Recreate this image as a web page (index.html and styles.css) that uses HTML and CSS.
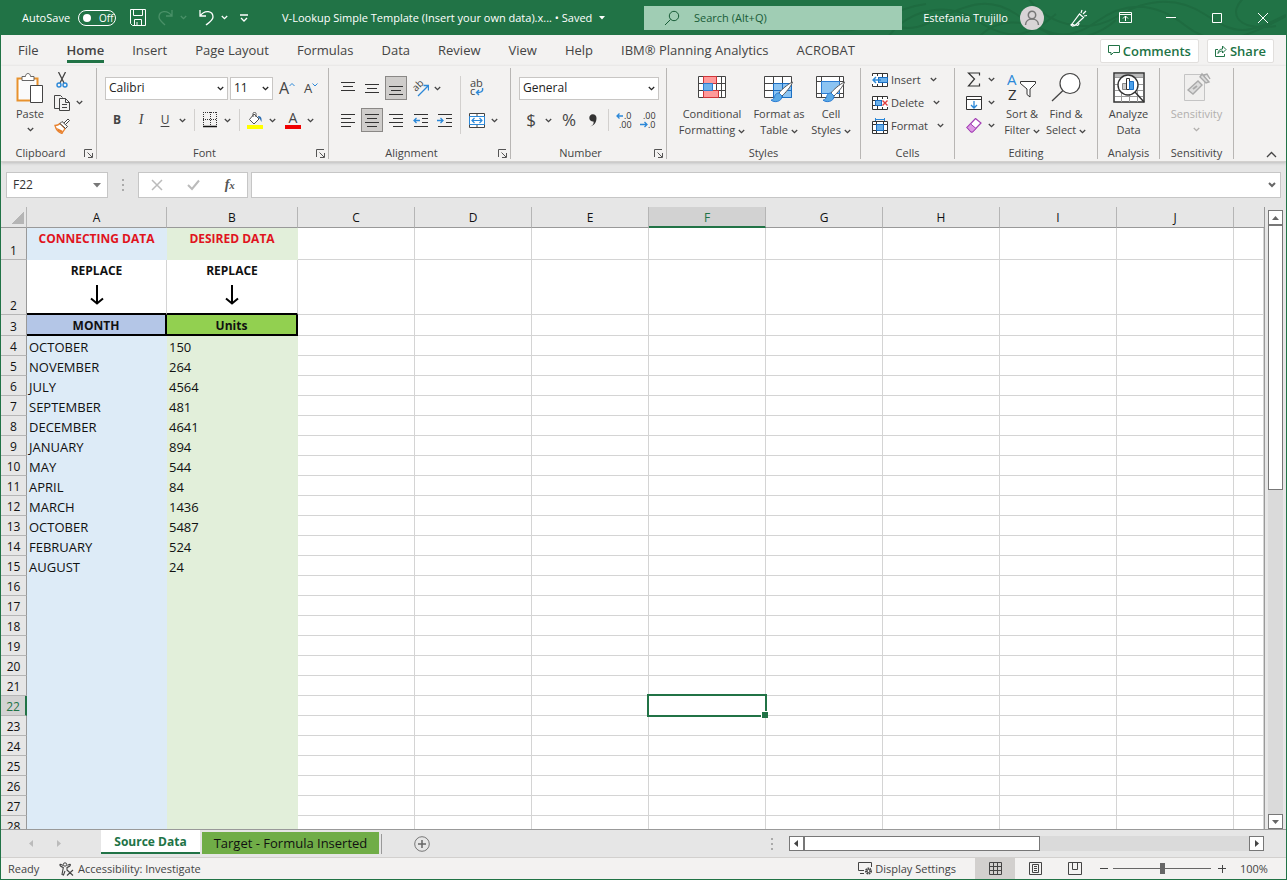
FILE: index.html
```html
<!DOCTYPE html>
<html lang="en">
<head>
    <meta charset="UTF-8">
    <meta name="viewport" content="width=device-width, initial-scale=1.0">
    <title>V-Lookup Simple Template</title>
    <link rel="stylesheet" href="styles.css">
</head>
<body>
    <!-- shared icons -->
    <svg class="sprite">
        <symbol id="chev" viewBox="0 0 7 5"><path d="M.8 1l2.7 2.6L6.2 1" fill="none" stroke="currentColor" stroke-width="1.3"/></symbol>
        <symbol id="launch" viewBox="0 0 9 9"><path d="M.5 8V.5H8M3.5 3.5L8 8M8.5 4v4.500H4" fill="none" stroke="#555"/></symbol>
        <symbol id="brush" viewBox="0 0 24 22"><path d="M22.500 1C18 3 11 9 9 12l3 3C15 12 21 6 22.500 1z" fill="#fff" stroke="#555"/><path d="M9 12c-4 0-4 3-5 5-1 1.500-2 2-3 2 3 3 11 2 11-4z" fill="#5aa9e6" stroke="#2b7cd3"/></symbol>
    </svg>

    <header class="titlebar">
        <svg class="swirls" viewBox="0 0 460 35" preserveAspectRatio="xMaxYMid slice">
            <path d="M0 12c30-20 60 30 100 12s60-30 90-10 50 30 80 8 60-20 90 4 60 12 100-10M60 40c20-30 60-40 90-20s50 20 80-6M200-5c20 30 60 40 90 22s60-22 90-2 40 20 80 0M0 28c40 12 60-20 100-24M150 40c20-24 50-20 70-8s50 6 70-12M420-4c-20 16-10 36 30 30"/>
        </svg>
        <div class="title-left">
            <label class="autosave" for="autosave">AutoSave</label>
            <span class="toggle"><input type="checkbox" id="autosave">Off</span>
            <button class="tb-btn" aria-label="Save"><svg width="16" height="17" viewBox="0 0 16 17"><path d="M.5.500h15v16h-13l-2-2zM3.500.500v6h9v-6M4.500 16.500v-6h7v6M7 16v-3" fill="none" stroke="#fff"/></svg></button>
            <button class="tb-btn dim" aria-label="Redo"><svg width="16" height="17" viewBox="0 0 16 17"><path d="M14 1v6H8M14 7C9 0 1 2 1 8c0 3 3 5 6 8" fill="none" stroke="currentColor" stroke-width="1.300"/></svg><svg class="chev"><use href="#chev"/></svg></button>
            <button class="tb-btn" aria-label="Undo"><svg width="16" height="17" viewBox="0 0 16 17"><path d="M1 1v6h6M1 7C6 0 14 2 14 8c0 3-3 5-7 8" fill="none" stroke="currentColor" stroke-width="1.300"/></svg><svg class="chev"><use href="#chev"/></svg></button>
            <button class="tb-btn" aria-label="Customize"><svg width="8" height="8" viewBox="0 0 8 8"><path d="M0 1h8M1 4l3 3 3-3" fill="none" stroke="#fff" stroke-width="1.300"/></svg></button>
            <span class="doc">V-Lookup Simple Template (Insert your own data).x... • Saved
                <svg width="6" height="4" viewBox="0 0 6 4"><path d="M0 0h6L3 3.500z" fill="#fff"/></svg>
            </span>
        </div>
        <div class="search">
            <svg width="16" height="16" viewBox="0 0 16 16"><path d="M6.500 9.500L1 15" stroke="#185c37"/><circle cx="10" cy="6" r="4.700" fill="none" stroke="#185c37"/></svg>
            <input type="text" placeholder="Search (Alt+Q)" aria-label="Search">
        </div>
        <div class="title-right">
            <span class="user">Estefania Trujillo</span>
            <svg class="avatar" width="24" height="24" viewBox="0 0 24 24"><circle cx="12" cy="12" r="12" fill="#d8d4d6"/><circle cx="12" cy="9" r="3.700" fill="none" stroke="#777" stroke-width="1.500"/><path d="M5.500 19c0-8 13-8 13 0" fill="none" stroke="#777" stroke-width="1.500"/></svg>
            <button class="win" aria-label="Coming soon"><svg width="18" height="18" viewBox="0 0 18 18"><path d="M2 15L9.500 5l4 3.500L5 16.500zM2 15l-1 1 1.500 1L5 16.500M6 15c0 2 3 2 3-1M11 4l1-3M13 5l3-3M14 7l3-.5" fill="none" stroke="#fff" stroke-width="1.200"/></svg></button>
            <button class="win" aria-label="Ribbon options"><svg width="13" height="11" viewBox="0 0 13 11"><path d="M.5.500h12v10H.5zM.5 2.500h12M6.500 9V4M4 6.500L6.500 4 9 6.500" fill="none" stroke="#fff"/></svg></button>
            <button class="win" aria-label="Minimize"><svg width="10" height="10" viewBox="0 0 10 10"><path d="M0 4.500h10" stroke="#fff"/></svg></button>
            <button class="win" aria-label="Maximize"><svg width="10" height="10" viewBox="0 0 10 10"><path d="M.5.500h9v9h-9z" fill="none" stroke="#fff"/></svg></button>
            <button class="win" aria-label="Close"><svg width="10" height="10" viewBox="0 0 10 10"><path d="M0 0l10 10M10 0L0 10" stroke="#fff"/></svg></button>
        </div>
    </header>

    <nav class="tabs">
        <a href="#">File</a>
        <a href="#" class="current">Home</a>
        <a href="#">Insert</a>
        <a href="#">Page Layout</a>
        <a href="#">Formulas</a>
        <a href="#">Data</a>
        <a href="#">Review</a>
        <a href="#">View</a>
        <a href="#">Help</a>
        <a href="#">IBM® Planning Analytics</a>
        <a href="#">ACROBAT</a>
        <div class="tab-actions">
            <button><svg width="12" height="11" viewBox="0 0 12 11"><path d="M.5.500h11v7h-6L3 10V7.500H.5z" fill="none" stroke="#217346"/></svg>Comments</button>
            <button><svg width="12" height="12" viewBox="0 0 12 12"><path d="M3 4.500H.5v7h9V9M3 8.500c0-3 2-4.500 4.500-4.500V1L11 4.500 7.500 8V6C5.500 6 4 6.500 3 8.500z" fill="none" stroke="#217346"/></svg>Share</button>
        </div>
    </nav>

    <section class="ribbon">
        <div class="group g-clip">
            <div class="body">
                <button class="big">
                    <svg width="28" height="30" viewBox="0 0 28 30"><path d="M1.500 5.500h20v22h-20z" fill="#fff" stroke="#e8912d" stroke-width="2"/><path d="M4 8h15v18H4z" fill="#fafafa"/><path d="M6 7.500v-4h3.500c0-4 5-4 5 0H18v4z" fill="#fff" stroke="#666"/><path d="M14.500 12.500h12v17h-12z" fill="#fff" stroke="#444"/></svg>
                    <span>Paste</span><svg class="chev"><use href="#chev"/></svg>
                </button>
                <div class="stack">
                    <button aria-label="Cut"><svg width="16" height="16" viewBox="0 0 16 16"><path d="M4.500 0l5.500 11M11.500 0L6 11" stroke="#444" stroke-width="1.300"/><circle cx="5" cy="13" r="2" fill="none" stroke="#2b88d8" stroke-width="1.400"/><circle cx="11" cy="13" r="2" fill="none" stroke="#2b88d8" stroke-width="1.400"/></svg></button>
                    <button aria-label="Copy"><svg width="16" height="16" viewBox="0 0 16 16"><path d="M5 13.500H.5v-13h6l2 2M5.500 3.500h6l4 4v8h-10zM11.500 3.500v4h4M8 9.500h5M8 12.500h5" fill="none" stroke="#444"/></svg><svg class="chev"><use href="#chev"/></svg></button>
                    <button aria-label="Format Painter"><svg width="16" height="16" viewBox="0 0 16 16"><path d="M1 7.500c3 0 4-1 5-2l5 5c-1 2-2 3-3 5-3-1-6-4-7-8z" fill="#fff" stroke="#e8812d" stroke-width="1.300"/><path d="M3 10l6 3-1 2-4-2z" fill="#e8812d"/><path d="M6 5.500l2-2 5.500 5-2 2zM10 5l4-4 1.500 1.500-4 4" fill="#fff" stroke="#444"/></svg></button>
                </div>
            </div>
            <div class="caption"><span>Clipboard</span><svg class="launch"><use href="#launch"/></svg></div>
        </div>

        <div class="group g-font">
            <div class="body rows">
                <div class="line">
                    <span class="drop font-name"><select aria-label="Font"><option>Calibri</option></select><svg class="chev"><use href="#chev"/></svg></span>
                    <span class="drop font-size"><select aria-label="Font size"><option>11</option></select><svg class="chev"><use href="#chev"/></svg></span>
                    <button class="ib letter-lg">A<svg width="6" height="12" viewBox="0 0 6 12"><path d="M.5 4L3 1.500 5.500 4" fill="none" stroke="#2b88d8"/></svg></button>
                    <button class="ib letter-md">A<svg width="6" height="12" viewBox="0 0 6 12"><path d="M.5 1.500L3 4l2.500-2.500" fill="none" stroke="#2b88d8"/></svg></button>
                </div>
                <div class="line">
                    <button class="ib bold">B</button>
                    <button class="ib italic">I</button>
                    <button class="ib under">U</button>
                    <button class="arrow" aria-label="Underline options"><svg class="chev"><use href="#chev"/></svg></button>
                    <i class="sep"></i>
                    <button class="ib" aria-label="Borders"><svg width="16" height="16" viewBox="0 0 16 16"><path d="M1.500 0v14M14.500 0v14M8.500 0v14M1 .500h14M1 7.500h14" fill="none" stroke="#333" stroke-dasharray="1 1"/><path d="M1 14.500h14" stroke="#111" stroke-width="1.500"/></svg></button>
                    <button class="arrow" aria-label="Border options"><svg class="chev"><use href="#chev"/></svg></button>
                    <i class="sep"></i>
                    <button class="ib" aria-label="Fill color"><svg width="16" height="17" viewBox="0 0 16 17"><path d="M0 13h16v4H0z" fill="#ff0"/><path d="M7 2L2.500 7.500 7 12l5-5zM6 5V1.500c0-1.500 3-1.500 3 0V5" fill="#fff" stroke="#555"/><path d="M11 4c3 0 4 2 3.500 6-1-1.500-1-3-3-4z" fill="#2b6cb0"/></svg></button>
                    <button class="arrow" aria-label="Fill options"><svg class="chev"><use href="#chev"/></svg></button>
                    <button class="ib font-color">A</button>
                    <button class="arrow" aria-label="Font color options"><svg class="chev"><use href="#chev"/></svg></button>
                </div>
            </div>
            <div class="caption"><span>Font</span><svg class="launch"><use href="#launch"/></svg></div>
        </div>

        <div class="group g-align">
            <div class="body">
                <div class="rows">
                    <div class="line">
                        <button class="ib" aria-label="Top align"><svg width="14" height="14" viewBox="0 0 14 14"><path d="M0 1.500h14M2 5.500h10M0 9.500h14" stroke="#333"/></svg></button>
                        <button class="ib" aria-label="Middle align"><svg width="14" height="14" viewBox="0 0 14 14"><path d="M0 3.500h14M2 7.500h10M0 11.500h14" stroke="#333"/></svg></button>
                        <button class="ib pressed" aria-label="Bottom align"><svg width="14" height="14" viewBox="0 0 14 14"><path d="M0 5.500h14M2 9.500h10M0 13.500h14" stroke="#333"/></svg></button>
                        <button class="ib" aria-label="Orientation"><svg width="18" height="18" viewBox="0 0 18 18"><text x="0" y="0" transform="translate(5 13) rotate(-45)" font-size="10" fill="#444">ab</text><path d="M7 17L17 7M12.500 6.500h5v5" fill="none" stroke="#2b88d8" stroke-width="1.300"/></svg></button>
                        <button class="arrow" aria-label="Orientation options"><svg class="chev"><use href="#chev"/></svg></button>
                    </div>
                    <div class="line">
                        <button class="ib" aria-label="Align left"><svg width="14" height="14" viewBox="0 0 14 14"><path d="M0 1.500h14M0 5.500h10M0 9.500h14M0 13.500h10" stroke="#333"/></svg></button>
                        <button class="ib pressed" aria-label="Center"><svg width="14" height="14" viewBox="0 0 14 14"><path d="M0 1.500h14M2 5.500h10M0 9.500h14M2 13.500h10" stroke="#333"/></svg></button>
                        <button class="ib" aria-label="Align right"><svg width="14" height="14" viewBox="0 0 14 14"><path d="M0 1.500h14M4 5.500h10M0 9.500h14M4 13.500h10" stroke="#333"/></svg></button>
                        <button class="ib" aria-label="Decrease indent"><svg width="15" height="14" viewBox="0 0 15 14"><path d="M1 1.500h14M9 5.500h6M9 9.500h6M1 13.500h14" stroke="#333"/><path d="M7 7.500H.8M3.500 5L1 7.500 3.500 10" fill="none" stroke="#2b88d8" stroke-width="1.300"/></svg></button>
                        <button class="ib" aria-label="Increase indent"><svg width="15" height="14" viewBox="0 0 15 14"><path d="M1 1.500h14M9 5.500h6M9 9.500h6M1 13.500h14" stroke="#333"/><path d="M0 7.500h6.200M3.500 5L6 7.500 3.500 10" fill="none" stroke="#2b88d8" stroke-width="1.300"/></svg></button>
                    </div>
                </div>
                <i class="sep tall"></i>
                <div class="rows">
                    <div class="line">
                        <button class="ib" aria-label="Wrap text"><svg width="16" height="18" viewBox="0 0 16 18"><text x="1" y="8" font-size="11" fill="#444">ab</text><text x="1" y="16" font-size="11" fill="#444">c</text><path d="M13.500 9c1 4-2 4.500-6 4.500M10 11l-2.500 2.500L10 16" fill="none" stroke="#2b88d8" stroke-width="1.400"/></svg></button>
                    </div>
                    <div class="line">
                        <button class="ib" aria-label="Merge"><svg width="16" height="15" viewBox="0 0 16 15"><path d="M.5.500h15v14H.5zM8 .500V3M8 12v2.500" fill="#fff" stroke="#444"/><path d="M.5 3.500h15v8H.5z" fill="#fff" stroke="#2b88d8"/><path d="M3 7.500h10M5.500 5L3 7.500 5.500 10M10.500 5L13 7.500 10.500 10" fill="none" stroke="#2b88d8" stroke-width="1.200"/></svg></button>
                        <button class="arrow" aria-label="Merge options"><svg class="chev"><use href="#chev"/></svg></button>
                    </div>
                </div>
            </div>
            <div class="caption"><span>Alignment</span><svg class="launch"><use href="#launch"/></svg></div>
        </div>

        <div class="group g-num">
            <div class="body rows">
                <div class="line">
                    <span class="drop num-format"><select aria-label="Number format"><option>General</option></select><svg class="chev"><use href="#chev"/></svg></span>
                </div>
                <div class="line">
                    <button class="ib sign">$</button>
                    <button class="arrow" aria-label="Currency options"><svg class="chev"><use href="#chev"/></svg></button>
                    <button class="ib sign">%</button>
                    <button class="ib" aria-label="Comma style"><svg width="8" height="13" viewBox="0 0 8 13"><path d="M1 12.500c3-1 4-3 3.500-5A3.600 3.600 0 1 1 7.500 4c0 4-2 7.500-6.500 8.500z" fill="#333"/></svg></button>
                    <i class="sep"></i>
                    <button class="ib" aria-label="Increase decimal"><svg width="16" height="18" viewBox="0 0 16 18"><text x="8" y="8" font-size="9" fill="#333">.0</text><text x="3" y="17" font-size="9" fill="#333">.00</text><path d="M7 5H1M3.500 2.500L1 5l2.500 2.500" fill="none" stroke="#2b88d8" stroke-width="1.300"/></svg></button>
                    <button class="ib" aria-label="Decrease decimal"><svg width="16" height="18" viewBox="0 0 16 18"><text x="3" y="8" font-size="9" fill="#333">.00</text><text x="8" y="17" font-size="9" fill="#333">.0</text><path d="M0 13.500h7M4.500 11L7 13.500 4.500 16" fill="none" stroke="#2b88d8" stroke-width="1.300"/></svg></button>
                </div>
            </div>
            <div class="caption"><span>Number</span><svg class="launch"><use href="#launch"/></svg></div>
        </div>

        <div class="group g-styles">
            <div class="body">
                <button class="big w-wide">
                    <svg width="28" height="28" viewBox="0 0 28 28"><path d="M.5 2.500h27v21H.5zM5.500 2.500v21M18.500 2.500v21M23.500 2.500v21M.5 9.500h27M.5 16.500h27" fill="#fff" stroke="#444"/><path d="M5.500 2.500h13v7h-13zM5.500 16.500h15v7h-15z" fill="#ff9a9a" stroke="#d13438"/><path d="M5.500 9.500h9v7h-9z" fill="#6db1ea" stroke="#2b7cd3"/></svg>
                    <span>Conditional<br>Formatting <svg class="chev"><use href="#chev"/></svg></span>
                </button>
                <button class="big w-mid">
                    <svg width="30" height="28" viewBox="0 0 30 28"><path d="M.5 2.500h27v21H.5zM9.500 2.500v21M18.500 2.500v21M.5 9.500h27M.5 16.500h27" fill="#fff" stroke="#444"/><path d="M9.500 9.500h18v14h-18zM18.500 9.500v14M9.500 16.500h18" fill="#8cc4f2" stroke="#1a6fc4"/><use href="#brush" x="6" y="7" width="24" height="22"/></svg>
                    <span>Format as<br>Table <svg class="chev"><use href="#chev"/></svg></span>
                </button>
                <button class="big w-small">
                    <svg width="30" height="28" viewBox="0 0 30 28"><path d="M.5 2.500h27v21H.5zM5.500 2.500v21M23.500 2.500v21M.5 7.500h27M.5 19.500h27" fill="#fff" stroke="#444"/><path d="M5.500 7.500h18v12h-18z" fill="#8cc4f2" stroke="#2b7cd3"/><use href="#brush" x="6" y="7" width="24" height="22"/></svg>
                    <span>Cell<br>Styles <svg class="chev"><use href="#chev"/></svg></span>
                </button>
            </div>
            <div class="caption"><span>Styles</span></div>
        </div>

        <div class="group g-cells">
            <div class="body">
                <div class="stack">
                    <button><svg width="16" height="14" viewBox="0 0 16 14"><path d="M.5.500h15v13H.5zM5.500.500v13M10.500.500v13M.5 4.500h15M.5 9.500h15" fill="#fff" stroke="#333"/><path d="M6.500 4.500h9v5h-9z" fill="#6db1ea" stroke="#1a6fc4"/><path d="M0 3h6v8H0z" fill="#fff"/><path d="M9 7H1M4 4L1 7l3 3" fill="none" stroke="#2b88d8" stroke-width="1.500"/></svg><span>Insert</span><svg class="chev"><use href="#chev"/></svg></button>
                    <button><svg width="16" height="14" viewBox="0 0 16 14"><path d="M.5.500h15v13H.5zM5.500.500v13M10.500.500v13M.5 4.500h15M.5 9.500h15" fill="#fff" stroke="#333"/><path d="M3.500 4.500h6v5h-6z" fill="#6db1ea" stroke="#1a6fc4"/><path d="M10 3h6v8h-6z" fill="#fff"/><path d="M10.500 4.500l5 5M15.500 4.500l-5 5" stroke="#e03c3c" stroke-width="1.400"/></svg><span>Delete</span><svg class="chev"><use href="#chev"/></svg></button>
                    <button><svg width="16" height="16" viewBox="0 0 16 16"><path d="M.5 3.500h15v12H.5zM4.500 3.500v12M11.500 3.500v12M.5 6.500h15M.5 12.500h15" fill="#fff" stroke="#333"/><path d="M4.500 6.500h7v6h-7z" fill="#6db1ea" stroke="#1a6fc4"/><path d="M3.500 0v3M12.500 0v3M4 1.500h8" stroke="#2b88d8"/></svg><span>Format</span><svg class="chev"><use href="#chev"/></svg></button>
                </div>
            </div>
            <div class="caption"><span>Cells</span></div>
        </div>

        <div class="group g-edit">
            <div class="body">
                <div class="stack">
                    <button aria-label="AutoSum"><svg width="16" height="15" viewBox="0 0 16 15"><path d="M13.500 3.500v-2.500h-11L8.500 7l-6 7h11v-2.500" fill="none" stroke="#333" stroke-width="1.200"/></svg><svg class="chev"><use href="#chev"/></svg></button>
                    <button aria-label="Fill"><svg width="16" height="14" viewBox="0 0 16 14"><path d="M.5.500h15v13H.5zM.5 3.500h15" fill="#fff" stroke="#333"/><path d="M8 5v6.500M5 9l3 3 3-3" fill="none" stroke="#2b88d8" stroke-width="1.300"/></svg><svg class="chev"><use href="#chev"/></svg></button>
                    <button aria-label="Clear"><svg width="16" height="15" viewBox="0 0 16 15"><path d="M1 9.500l8.500-9 5.500 4.500-8.500 9H5z" fill="#fff" stroke="#a33fb5" stroke-width="1.200"/><path d="M1 9.500l3.500-3.700L10 10.500 6.500 14H5z" fill="#dd9be4" stroke="#a33fb5"/></svg><svg class="chev"><use href="#chev"/></svg></button>
                </div>
                <button class="big w-small">
                    <svg width="30" height="30" viewBox="0 0 30 30"><text x="0" y="12" font-size="15" fill="#2b88d8">A</text><text x="1" y="27" font-size="15" fill="#333">Z</text><path d="M13.500 8.500h15v2l-5.500 5.500v8l-3-2.500V16l-6.500-5.500z" fill="#fff" stroke="#333"/></svg>
                    <span>Sort &amp;<br>Filter <svg class="chev"><use href="#chev"/></svg></span>
                </button>
                <button class="big w-small">
                    <svg width="30" height="30" viewBox="0 0 30 30"><circle cx="19" cy="10.500" r="10" fill="#fff" stroke="#444" stroke-width="1.200"/><path d="M12 17.500L1 28" stroke="#444" stroke-width="1.300"/></svg>
                    <span>Find &amp;<br>Select <svg class="chev"><use href="#chev"/></svg></span>
                </button>
            </div>
            <div class="caption"><span>Editing</span></div>
        </div>

        <div class="group g-analysis">
            <div class="body">
                <button class="big">
                    <svg width="32" height="32" viewBox="0 0 32 32"><path d="M1 1h30v29H1z" fill="#fff" stroke="#333" stroke-width="1.500"/><path d="M2 2h28v3H2z" fill="#bbb"/><path d="M2 5.500h28M2 12.500h28M2 18.500h28M2 24.500h28M8.500 19v11M16.500 19v11M24.500 19v11" stroke="#999"/><circle cx="15" cy="13" r="10" fill="#fff" stroke="#333" stroke-width="1.400"/><path d="M22 20l9 10" stroke="#333" stroke-width="1.500"/><path d="M9.500 11.500h4v6h-4z" fill="#ccc" stroke="#888"/><path d="M13.500 6.500h3v11h-3z" fill="#fff" stroke="#333"/><path d="M16.500 9.500h4v8h-4z" fill="#4ba0ea" stroke="#1a6fc4"/></svg>
                    <span>Analyze<br>Data</span>
                </button>
            </div>
            <div class="caption"><span>Analysis</span></div>
        </div>

        <div class="group g-sens">
            <div class="body">
                <button class="big" disabled>
                    <svg width="28" height="30" viewBox="0 0 28 30"><path d="M1.500 1.500h20v26h-20z" fill="#f0efee" stroke="#c4c4c4"/><path d="M5 17l10-9 4 4-9 9zM17 4l2-3 7 8-3 1zM21 2l3-1 3 5" fill="#ddd" stroke="#aaa" stroke-width="1.400"/><path d="M10 16l4-3" stroke="#aaa" stroke-width="2"/></svg>
                    <span>Sensitivity</span><svg class="chev"><use href="#chev"/></svg>
                </button>
            </div>
            <div class="caption"><span>Sensitivity</span></div>
        </div>
        <button class="collapse" aria-label="Collapse ribbon"><svg width="11" height="7" viewBox="0 0 11 7"><path d="M1 6l4.500-4.500L10 6" fill="none" stroke="#444" stroke-width="1.300"/></svg></button>
    </section>

    <section class="formula-bar">
        <div class="name-box">
            <input type="text" value="F22" aria-label="Name box">
            <svg width="8" height="5" viewBox="0 0 8 5"><path d="M0 0h8L4 4.500z" fill="#777"/></svg>
        </div>
        <span class="dots"></span>
        <div class="fx-box">
            <button aria-label="Cancel"><svg width="12" height="12" viewBox="0 0 12 12"><path d="M1 1l10 10M11 1L1 11" stroke="#bbb" stroke-width="1.500"/></svg></button>
            <button aria-label="Enter"><svg width="13" height="12" viewBox="0 0 13 12"><path d="M1 6l4 4 7-8.500" fill="none" stroke="#bbb" stroke-width="2"/></svg></button>
            <button class="fx"><i>f</i><small>x</small></button>
        </div>
        <div class="formula">
            <input type="text" aria-label="Formula bar">
            <svg width="8" height="6" viewBox="0 0 8 6"><path d="M1 1l3 3 3-3" fill="none" stroke="#666" stroke-width="2"/></svg>
        </div>
    </section>

    <main class="sheet">
        <div class="cells">
            <table>
                <colgroup>
                    <col class="c-head"><col class="c-a"><col class="c-b">
                    <col class="c"><col class="c"><col class="c"><col class="c"><col class="c"><col class="c"><col class="c"><col class="c"><col>
                </colgroup>
                <thead>
                    <tr><th class="corner"></th><th>A</th><th>B</th><th>C</th><th>D</th><th>E</th><th class="sel">F</th><th>G</th><th>H</th><th>I</th><th>J</th><th></th></tr>
                </thead>
                <tbody id="rows"></tbody>
            </table>
        </div>
        <div class="vscroll">
            <button aria-label="Scroll up"><svg width="7" height="4" viewBox="0 0 7 4"><path d="M0 4h7L3.500 0z" fill="#666"/></svg></button>
            <div class="track"><div class="thumb"></div></div>
            <button aria-label="Scroll down"><svg width="7" height="4" viewBox="0 0 7 4"><path d="M0 0h7L3.500 4z" fill="#666"/></svg></button>
        </div>
    </main>

    <div class="sheet-tabs">
        <div class="nav-arrows">
            <svg width="4" height="7" viewBox="0 0 4 7"><path d="M4 0v7L0 3.500z" fill="#bbb"/></svg>
            <svg width="4" height="7" viewBox="0 0 4 7"><path d="M0 0v7l4-3.500z" fill="#bbb"/></svg>
        </div>
        <button class="tab active">Source Data</button>
        <button class="tab target">Target - Formula Inserted</button>
        <i class="tab-sep"></i>
        <button class="add" aria-label="New sheet"><svg width="16" height="16" viewBox="0 0 16 16"><circle cx="8" cy="8" r="7.300" fill="none" stroke="#777"/><path d="M8 4v8M4 8h8" stroke="#666" stroke-width="1.500"/></svg></button>
        <span class="dots"></span>
        <div class="hscroll">
            <button aria-label="Scroll left"><svg width="4" height="7" viewBox="0 0 4 7"><path d="M4 0v7L0 3.500z" fill="#444"/></svg></button>
            <div class="track"><div class="thumb"></div></div>
            <button aria-label="Scroll right"><svg width="4" height="7" viewBox="0 0 4 7"><path d="M0 0v7l4-3.500z" fill="#444"/></svg></button>
        </div>
    </div>

    <footer class="status">
        <span class="ready">Ready</span>
        <span class="access"><svg width="15" height="14" viewBox="0 0 15 14"><circle cx="6" cy="2.500" r="1.700" fill="none" stroke="#444"/><path d="M.8 2.500c0 2 2 2.500 3.500 3L3 12.500l1.500.5L6 9M11.500 2.500c0 2-2 2.500-3.500 3v3M.8 2.500c1-1 2 .5 3 1M11.500 2.500c-1-1-2 .5-3 1M8 8l6 5.500M14 8l-6 5.500" fill="none" stroke="#444" stroke-width="1.100"/></svg>Accessibility: Investigate</span>
        <span class="display"><svg width="15" height="13" viewBox="0 0 15 13"><path d="M6 8.500H.5v-8h13V5M2 11.500h4" fill="none" stroke="#444"/><circle cx="10.500" cy="9" r="2.500" fill="none" stroke="#444" stroke-width="2" stroke-dasharray="1.500 .6"/><circle cx="10.500" cy="9" r="1.500" fill="#f3f2f1" stroke="#444"/></svg>Display Settings</span>
        <button class="view on" aria-label="Normal"><svg width="13" height="13" viewBox="0 0 13 13"><path d="M.5.500h12v12H.5zM4.500.500v12M8.500.500v12M.5 4.500h12M.5 8.500h12" fill="none" stroke="#444"/></svg></button>
        <button class="view" aria-label="Page layout"><svg width="13" height="13" viewBox="0 0 13 13"><path d="M.5.500h12v12H.5zM3.500 2.500h6v8h-6zM5 4.500h3M5 6.500h3M5 8.500h3" fill="none" stroke="#444"/></svg></button>
        <button class="view" aria-label="Page break"><svg width="14" height="13" viewBox="0 0 14 13"><path d="M.5.500h13v12H.5zM4.500.500v7M4.500 7.500h5M9.500.500v7" fill="none" stroke="#444"/></svg></button>
        <button class="zoom-btn" aria-label="Zoom out"><svg width="8" height="8" viewBox="0 0 8 8"><path d="M0 3.500h8" stroke="#444"/></svg></button>
        <input type="range" class="zoom" min="10" max="190" value="100" aria-label="Zoom">
        <button class="zoom-btn" aria-label="Zoom in"><svg width="8" height="8" viewBox="0 0 8 8"><path d="M0 3.500h8M4.500 0v8" stroke="#444"/></svg></button>
        <span class="percent">100%</span>
    </footer>

    <script>
        const data = [
            ['OCTOBER', 150], ['NOVEMBER', 264], ['JULY', 4564], ['SEPTEMBER', 481],
            ['DECEMBER', 4641], ['JANUARY', 894], ['MAY', 544], ['APRIL', 84],
            ['MARCH', 1436], ['OCTOBER', 5487], ['FEBRUARY', 524], ['AUGUST', 24]
        ];
        const arrow = '<svg width="14" height="20" viewBox="0 0 14 20"><path d="M7 0v18M1 13.500L7 18.500l6-5" fill="none" stroke="#000" stroke-width="2"/></svg>';
        const head = {
            1: ['CONNECTING DATA', 'DESIRED DATA'],
            2: ['REPLACE<br>' + arrow, 'REPLACE<br>' + arrow],
            3: ['MONTH', 'Units']
        };

        let html = '';
        for (let r = 1; r <= 28; r++) {
            const pair = head[r] || data[r - 4] || ['', ''];
            html += '<tr class="r' + (r < 4 ? r : '') + '"><th class="' + (r === 22 ? 'sel' : '') + '">' + r + '</th>';
            html += '<td class="a">' + pair[0] + '</td><td class="b">' + pair[1] + '</td>';
            for (let c = 2; c <= 10; c++) {
                html += (r === 22 && c === 5) ? '<td class="active-cell"></td>' : '<td></td>';
            }
            html += '</tr>';
        }
        document.getElementById('rows').innerHTML = html;
    </script>
</body>
</html>
```
FILE: styles.css
```css
* {
    box-sizing: border-box;
}

body {
    margin: 0;
    height: 100vh;
    display: flex;
    flex-direction: column;
    overflow: hidden;
    border: 1px solid #217346;
    border-top: none;
    background: #e6e6e6;
    color: #333;
    font-family: "Open Sans", "Noto Sans", sans-serif;
    font-size: 11px;
    line-height: 16px;
}

button {
    display: flex;
    align-items: center;
    justify-content: center;
    padding: 0;
    border: none;
    background: none;
    color: inherit;
    font: inherit;
    cursor: pointer;
}

input,
select {
    font: inherit;
    color: inherit;
    border: none;
    outline: none;
    padding: 0;
    background: none;
    min-width: 0;
}

svg {
    flex: none;
}

.sprite {
    display: none;
}

.chev {
    width: 7px;
    height: 5px;
}

/* title bar */
.titlebar {
    position: relative;
    flex: none;
    display: flex;
    align-items: center;
    height: 35px;
    background: #217346;
    color: #fff;
}

.swirls {
    position: absolute;
    right: 0;
    top: 0;
    width: 460px;
    height: 35px;
    fill: none;
    stroke: #1e6b40;
    stroke-width: 2;
}

.title-left {
    flex: 1;
    display: flex;
    align-items: center;
    padding-left: 21px;
}

.toggle {
    display: flex;
    align-items: center;
    gap: 8px;
    width: 38px;
    height: 16px;
    margin: 0 14px 0 8px;
    padding-left: 4px;
    border: 1px solid #fff;
    border-radius: 8px;
    font-size: 10px;
}

.toggle input {
    appearance: none;
    width: 8px;
    height: 8px;
    margin: 0;
    border-radius: 50%;
    background: #fff;
}

.tb-btn {
    gap: 6px;
    margin-right: 12px;
}

.dim {
    color: #4a9168;
}

.doc {
    margin-left: 22px;
    white-space: nowrap;
}

.doc svg {
    margin: 0 0 2px 4px;
}

.search {
    position: relative;
    display: flex;
    align-items: center;
    gap: 14px;
    width: 258px;
    height: 24px;
    padding-left: 20px;
    background: #a0cdb4;
    color: #185c37;
}

.search input::placeholder {
    color: #185c37;
}

.title-right {
    position: relative;
    flex: 1;
    max-width: 384px;
    display: flex;
    align-items: center;
    justify-content: flex-end;
}

.user {
    margin-right: 12px;
}

.avatar {
    margin-right: 12px;
}

.win {
    width: 46px;
    height: 35px;
}

/* ribbon tabs */
.tabs {
    flex: none;
    display: flex;
    align-items: center;
    gap: 28px;
    height: 31px;
    padding: 0 12px 0 17px;
    background: #f3f2f1;
    font-size: 13px;
}

.tabs a {
    padding: 4px 0 2px;
    border-bottom: 3px solid transparent;
    color: #444;
    text-decoration: none;
    white-space: nowrap;
}

.tabs .current {
    border-color: #217346;
    font-weight: 600;
}

.tab-actions {
    display: flex;
    gap: 8px;
    margin-left: auto;
}

.tab-actions button {
    gap: 3px;
    height: 24px;
    padding: 0 7px;
    border: 1px solid #e1dfdd;
    border-radius: 2px;
    background: #fff;
    color: #217346;
    font-size: 13px;
    font-weight: 600;
}

/* ribbon */
.ribbon {
    flex: none;
    display: flex;
    height: 96px;
    padding: 2px 0 0;
    background: #f3f2f1;
    border-bottom: 1px solid #d2d0ce;
    box-shadow: 0 1px 3px #bbb;
    color: #444;
}

.group {
    flex: none;
    display: flex;
    flex-direction: column;
    margin-bottom: 2px;
    border-right: 1px solid #b8b6b4;
}

.g-clip { width: 96px; }
.g-font { width: 232px; }
.g-align { width: 182px; }
.g-num { width: 156px; }
.g-styles { width: 194px; }
.g-cells { width: 94px; }
.g-edit { width: 143px; }
.g-analysis { width: 62px; }
.g-sens { width: 74px; }

.body {
    flex: 1;
    display: flex;
    padding-left: 8px;
}

.caption {
    display: flex;
    align-items: center;
    height: 12px;
    line-height: 12px;
}

.caption span {
    flex: 1;
    text-align: center;
}

.launch {
    width: 9px;
    height: 9px;
    margin: 0 3px 0 4px;
}

.big {
    flex-direction: column;
    justify-content: flex-start;
    align-self: flex-start;
    min-width: 44px;
    padding-top: 4px;
}

.big > svg:first-child {
    height: 32px;
    margin-bottom: 2px;
}

.big > .chev {
    margin-top: 5px;
}

.big:disabled {
    color: #b1afad;
}

.w-wide { width: 74px; }
.w-mid { width: 60px; }
.w-small { width: 44px; }

.big span {
    white-space: nowrap;
}

.stack {
    display: flex;
    flex-direction: column;
}

.stack button {
    justify-content: flex-start;
    gap: 6px;
    height: 23px;
}

.rows {
    display: flex;
    flex-direction: column;
    gap: 8px;
    padding-top: 8px;
}

.line {
    display: flex;
    align-items: center;
    height: 24px;
}

.ib {
    width: 24px;
    height: 24px;
}

.arrow {
    width: 14px;
    height: 24px;
    padding-right: 4px;
}

.pressed {
    width: 22px;
    margin: 0 1px;
    background: #cfcdcb;
    border: 1px solid #8a8886;
}

.sep {
    width: 1px;
    height: 22px;
    margin: 0 3px;
    background: #d2d0ce;
}

.sep.tall {
    height: 58px;
    margin: 8px 4px 0;
}

.drop {
    display: flex;
    align-items: center;
    height: 23px;
    padding: 0 3px;
    margin-right: 2px;
    border: 1px solid #c8c6c4;
    background: #fff;
    color: #222;
    font-size: 12px;
}

.drop select {
    appearance: none;
    flex: 1;
}

.font-name { width: 123px; }
.font-size { width: 43px; }
.num-format { width: 140px; }

.g-clip .body { padding-left: 7px; }
.g-clip .stack { margin-left: 2px; }
.g-align .body { padding-left: 7px; }
.g-cells .body { padding-left: 11px; }
.g-cells .stack button { gap: 3px; }
.g-cells .chev { margin-left: 6px; }
.g-edit .body { padding-left: 11px; }
.g-edit .stack { margin-right: 5px; }
.g-analysis .body,
.g-sens .body { padding-left: 0; justify-content: center; }

.letter-lg {
    font-size: 16px;
}

.letter-md {
    font-size: 13px;
}

.bold { font-weight: 700; font-size: 12px; }
.italic { font: italic 14px "Liberation Serif", serif; }
.under { font-size: 12px; text-decoration: underline; text-underline-offset: 2px; }

.font-color {
    width: 16px;
    height: 17px;
    margin: 0 4px;
    border-bottom: 4px solid #f00000;
    font-size: 14px;
}

.sign {
    font-size: 17px;
}

.collapse {
    align-self: flex-end;
    margin: 0 9px 3px auto;
}

/* formula bar */
.formula-bar {
    flex: none;
    display: flex;
    align-items: center;
    height: 45px;
    padding: 1px 5px 0;
}

.name-box,
.fx-box,
.formula {
    display: flex;
    align-items: center;
    height: 26px;
    border: 1px solid #c6c6c6;
    background: #fff;
}

.name-box {
    width: 102px;
    padding: 0 6px;
    font-size: 12px;
}

.name-box input,
.formula input {
    flex: 1;
}

.dots {
    width: 2px;
    height: 12px;
    background: repeating-linear-gradient(#aaa 0 2px, transparent 2px 5px);
}

.formula-bar .dots {
    margin: 0 14px;
}

.fx-box {
    width: 110px;
    justify-content: space-around;
    margin-right: 3px;
}

.fx {
    font: bold 14px "Liberation Serif", serif;
    color: #555;
}

.fx small {
    font-size: 11px;
    font-style: italic;
}

.formula {
    flex: 1;
    padding-right: 4px;
}

/* sheet */
.sheet {
    flex: 1;
    min-height: 0;
    display: flex;
}

.cells {
    flex: 1;
    overflow: hidden;
    border-right: 1px solid #999;
}

table {
    width: 100%;
    table-layout: fixed;
    border-collapse: separate;
    border-spacing: 0;
    color: #111;
    font-size: 12px;
}

.c-head { width: 26px; }
.c-a { width: 140px; }
.c-b { width: 131px; }
.c { width: 117px; }

tr {
    height: 20px;
}

th,
td {
    padding: 2px 2px 0;
    border-right: 1px solid #d4d4d4;
    border-bottom: 1px solid #d4d4d4;
    background: #fff;
    white-space: nowrap;
    line-height: 16px;
}

td {
    font-size: 13px;
}

th {
    padding: 0;
    background: #e6e6e6;
    border-color: #b5b5b5;
    font-weight: 400;
    vertical-align: bottom;
}

thead th {
    height: 21px;
    padding-top: 2px;
    border-bottom-color: #999;
    vertical-align: middle;
}

thead th:last-child {
    border-right: none;
}

tbody th {
    border-right-color: #999;
}

.corner {
    background: linear-gradient(135deg, transparent 50%, #b5b5b5 50%) 11px 5px / 12px 12px no-repeat #e6e6e6;
    border-right-color: #b5b5b5;
}

th.sel {
    background: #d2d2d2;
    color: #217346;
}

thead .sel {
    border-bottom: 2px solid #217346;
}

tbody .sel {
    border-right: 2px solid #217346;
}

.a {
    background: #ddebf7;
    border-color: #ddebf7;
}

.b {
    background: #e2efda;
    border-color: #e2efda;
}

.r1 { height: 32px; }
.r2 { height: 55px; }
.r3 { height: 21px; }

.r1 td,
.r2 td,
.r3 td {
    text-align: center;
    vertical-align: top;
    font-size: 12px;
    font-weight: 700;
}

.r1 td,
.r2 td {
    padding-top: 3px;
}

.r1 td {
    color: #e0141e;
}

.r2 .a,
.r2 .b {
    background: #fff;
    border-right-color: #d4d4d4;
    border-bottom: 2px solid #000;
}

.r2 svg {
    display: block;
    margin: 6px auto 0;
}

.r3 td {
    vertical-align: middle;
}

.r3 .a,
.r3 .b {
    background: #b4c6e7;
    border-right: 2px solid #000;
    border-bottom: 2px solid #000;
}

.r3 .b {
    background: #92d050;
}

.active-cell {
    position: relative;
}

.active-cell::before {
    content: "";
    position: absolute;
    inset: -2px;
    border: 2px solid #217346;
}

.active-cell::after {
    content: "";
    position: absolute;
    right: -3px;
    bottom: -3px;
    width: 6px;
    height: 6px;
    background: #217346;
    border: solid #fff;
    border-width: 1px 0 0 1px;
}

.vscroll {
    display: flex;
    flex-direction: column;
    width: 15px;
    margin: 3px 3px 0;
}

.track {
    flex: 1;
    background: #dadada;
}

.thumb {
    background: #fff;
    border: 1px solid #777;
}

.vscroll button,
.hscroll button {
    width: 15px;
    height: 15px;
    border: 1px solid #777;
    background: #fff;
}

.vscroll .thumb {
    height: 45%;
}

/* sheet tabs */
.sheet-tabs {
    flex: none;
    display: flex;
    align-items: center;
    height: 28px;
    border-top: 1px solid #999;
}

.nav-arrows {
    display: flex;
    gap: 24px;
    width: 100px;
    padding-left: 28px;
}

.tab {
    align-self: flex-start;
    height: 24px;
    margin-right: 2px;
    font-size: 12px;
}

.active {
    width: 99px;
    padding-top: 2px;
    background: #fff;
    border-bottom: 2px solid #217346;
    color: #217346;
    font-weight: 700;
}

.target {
    width: 177px;
    height: 22px;
    margin-top: 2px;
    background: #70ad47;
    color: #111;
    font-size: 13px;
}

.tab-sep {
    width: 1px;
    height: 20px;
    background: #999;
}

.add {
    margin: 0 auto 0 32px;
}

.hscroll {
    display: flex;
    width: 37%;
    margin: 0 22px 0 16px;
}

.hscroll .thumb {
    width: 53%;
    height: 15px;
}

/* status bar */
.status {
    flex: none;
    display: flex;
    align-items: center;
    height: 22px;
    padding-left: 7px;
    border-top: 1px solid #d2d0ce;
    background: #f3f2f1;
    color: #444;
}

.ready {
    width: 51px;
}

.access,
.display {
    display: flex;
    align-items: center;
    gap: 4px;
}

.display {
    margin: 0 19px 0 auto;
    gap: 2px;
}

.view {
    width: 40px;
    height: 21px;
}

.on {
    background: #d2d0ce;
}

.zoom-btn {
    width: 18px;
    height: 20px;
}

.zoom {
    appearance: none;
    width: 98px;
    height: 12px;
    margin: 0 2px 0 0;
    background: linear-gradient(#666, #666) center / 100% 1px no-repeat;
}

.zoom::-webkit-slider-thumb {
    appearance: none;
    width: 5px;
    height: 11px;
    background: #666;
}

.percent {
    width: 46px;
    margin-left: 9px;
}
```
